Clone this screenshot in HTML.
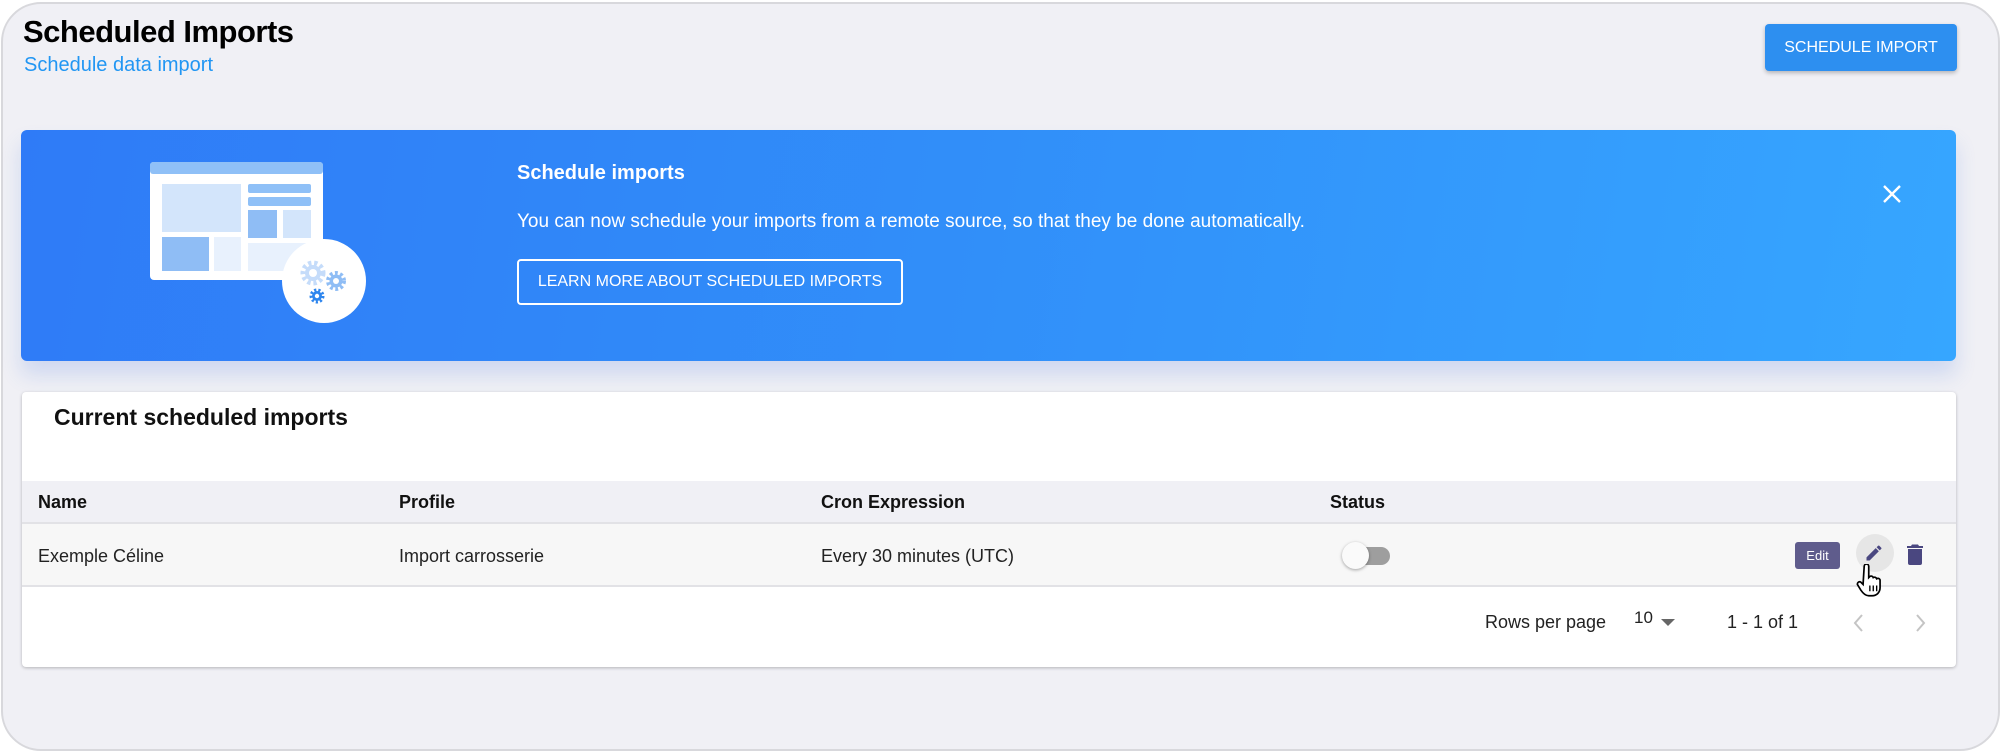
<!DOCTYPE html>
<html><head><meta charset="utf-8"><style>
*{box-sizing:border-box;margin:0;padding:0}
body{width:2004px;height:754px;background:#fff;font-family:"Liberation Sans",sans-serif;position:relative;overflow:hidden}
.frame{position:absolute;left:1px;top:2px;width:1999px;height:749px;background:#f0f0f5;border:2px solid #d8d8dc;border-radius:40px}
.abs{position:absolute}
.title{left:23px;top:14px;font-size:31px;font-weight:bold;color:#000;letter-spacing:-0.5px}
.sub{left:24px;top:54px;font-size:20px;color:#2196f3}
.btn{left:1765px;top:24px;width:192px;height:47px;background:#2d8ff0;border-radius:4px;color:#fff;font-size:16px;text-align:center;line-height:47px;box-shadow:0 2px 4px rgba(0,0,0,.25)}
.banner{left:21px;top:130px;width:1935px;height:231px;border-radius:6px;background:linear-gradient(100deg,#2f7bf7 0%,#318ff9 50%,#36a6ff 100%);box-shadow:0 14px 20px rgba(60,110,220,.18)}
.bt{left:517px;top:162px;font-size:20px;font-weight:bold;color:#fff}
.bb{left:517px;top:211px;font-size:19px;color:#fff}
.lb{left:517px;top:259px;width:386px;height:46px;border:2px solid #fff;border-radius:4px;color:#fff;font-size:16px;line-height:42px;text-align:center}
.card{left:22px;top:392px;width:1934px;height:275px;background:#fff;border-radius:4px;box-shadow:0 1px 3px rgba(0,0,0,.25)}
.ch{left:54px;top:404px;font-size:23px;font-weight:bold;color:#111}
.thead{left:22px;top:481px;width:1934px;height:43px;background:#f0f0f5;border-bottom:2px solid #e2e2e6}
.trow{left:22px;top:524px;width:1934px;height:63px;background:#f7f7f7;border-bottom:2px solid #e2e2e6}
.th{font-size:18px;font-weight:bold;color:#111;top:492px}
.td{font-size:18px;color:#222;top:546px}
.ft{font-size:18px;color:#222;top:612px}
</style></head><body>
<div class="frame"></div>
<div class="abs title">Scheduled Imports</div>
<div class="abs sub">Schedule data import</div>
<div class="abs btn">SCHEDULE IMPORT</div>
<div class="abs banner"></div>
<svg class="abs" style="left:140px;top:150px" width="240" height="180" viewBox="140 150 240 180">
<rect x="150" y="162" width="173" height="118" rx="4" fill="#fff"/>
<rect x="150" y="162" width="173" height="12" rx="3" fill="#8fc0f7"/>
<rect x="162" y="184" width="79" height="48" fill="#d3e5fb"/>
<rect x="248" y="184" width="63" height="9" rx="2" fill="#8fc0f7"/>
<rect x="248" y="197" width="63" height="9" rx="2" fill="#8fc0f7"/>
<rect x="248" y="210" width="29" height="28" fill="#8fbdf5"/>
<rect x="283" y="210" width="28" height="28" fill="#d3e5fb"/>
<rect x="162" y="237" width="47" height="34" fill="#8fbdf5"/>
<rect x="214" y="237" width="27" height="34" fill="#e8f1fd"/>
<rect x="248" y="243" width="63" height="28" fill="#e8f1fd"/>
<circle cx="324" cy="281" r="42" fill="#fff"/>
<circle cx="313" cy="273" r="10" fill="none" stroke="#c5dcfa" stroke-width="5" stroke-dasharray="3.2 2.8"/>
<circle cx="313" cy="273" r="8" fill="#c5dcfa"/><circle cx="313" cy="273" r="4" fill="#fff"/>
<circle cx="336" cy="281" r="8" fill="none" stroke="#8fbdf5" stroke-width="4" stroke-dasharray="2.8 2.4"/>
<circle cx="336" cy="281" r="6.5" fill="#8fbdf5"/><circle cx="336" cy="281" r="3" fill="#fff"/>
<circle cx="317" cy="296" r="6" fill="none" stroke="#2e86ee" stroke-width="3" stroke-dasharray="2.2 2"/>
<circle cx="317" cy="296" r="5" fill="#2e86ee"/><circle cx="317" cy="296" r="2.2" fill="#fff"/>
</svg>
<div class="abs bt">Schedule imports</div>
<div class="abs bb">You can now schedule your imports from a remote source, so that they be done automatically.</div>
<div class="abs lb">LEARN MORE ABOUT SCHEDULED IMPORTS</div>
<svg class="abs" style="left:1881px;top:183px" width="22" height="22"><path d="M3 3L19 19M19 3L3 19" stroke="#fff" stroke-width="2.4"/></svg>
<div class="abs card"></div>
<div class="abs ch">Current scheduled imports</div>
<div class="abs thead"></div>
<div class="abs trow"></div>
<div class="abs th" style="left:38px">Name</div>
<div class="abs th" style="left:399px">Profile</div>
<div class="abs th" style="left:821px">Cron Expression</div>
<div class="abs th" style="left:1330px">Status</div>
<div class="abs td" style="left:38px">Exemple Céline</div>
<div class="abs td" style="left:399px">Import carrosserie</div>
<div class="abs td" style="left:821px">Every 30 minutes (UTC)</div>
<div class="abs" style="left:1348px;top:547px;width:42px;height:18px;border-radius:9px;background:#9e9e9e"></div>
<div class="abs" style="left:1342px;top:542px;width:27px;height:27px;border-radius:50%;background:#fafafa;box-shadow:0 1px 3px rgba(0,0,0,.35)"></div>
<div class="abs" style="left:1795px;top:542px;width:45px;height:27px;border-radius:3px;background:#5f5c8c;color:#fff;font-size:13px;line-height:27px;text-align:center">Edit</div>
<div class="abs" style="left:1856px;top:534px;width:38px;height:38px;border-radius:50%;background:#e6e6e6"></div>
<svg class="abs" style="left:1864px;top:543px" width="20" height="20" viewBox="0 0 24 24"><path d="M3 17.25V21h3.75L17.81 9.94l-3.75-3.75L3 17.25zM20.71 7.04a1 1 0 000-1.41l-2.34-2.34a1 1 0 00-1.41 0l-1.83 1.83 3.75 3.75 1.83-1.83z" fill="#4a4780"/></svg>
<svg class="abs" style="left:1906px;top:543px" width="18" height="22" viewBox="0 0 18 22"><path d="M2 6h14v14a2 2 0 01-2 2H4a2 2 0 01-2-2z M1 3h4l1-1.5h6L13 3h4v2H1z" fill="#4a4780"/></svg>
<svg class="abs" style="left:1856px;top:564px" width="30" height="34" viewBox="0 0 26 30"><path d="M7 2a2 2 0 014 0v10l1-1a2 2 0 013 1 2 2 0 013 1 2 2 0 013 1v7c0 4-3 7-7 7h-3c-3 0-5-2-7-5l-3-5a2 2 0 013-2l2 2z" fill="#fff" stroke="#000" stroke-width="1.5"/><path d="M12 19v5M15 19v5M18 19v5" stroke="#000" stroke-width="1.2"/></svg>
<div class="abs ft" style="left:1485px">Rows per page</div>
<div class="abs ft" style="left:1634px;top:608px;font-size:17px">10</div>
<svg class="abs" style="left:1661px;top:619px" width="14" height="8"><path d="M0 0h14L7 7z" fill="#666"/></svg>
<div class="abs ft" style="left:1727px">1 - 1 of 1</div>
<svg class="abs" style="left:1852px;top:613px" width="12" height="20"><path d="M10 2L3 10l7 8" fill="none" stroke="#c4c4c4" stroke-width="2"/></svg>
<svg class="abs" style="left:1915px;top:613px" width="12" height="20"><path d="M2 2l7 8-7 8" fill="none" stroke="#c4c4c4" stroke-width="2"/></svg>
</body></html>
